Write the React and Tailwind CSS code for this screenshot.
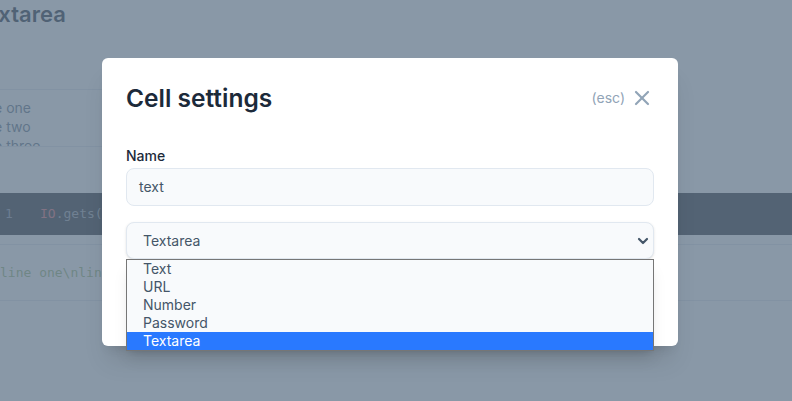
import { X } from 'lucide-react'

const options = ['Text', 'URL', 'Number', 'Password', 'Textarea']

function Chevron() {
  return (
    <svg width="12" height="12" viewBox="0 0 12 12" fill="none" className="text-[#445668]">
      <path d="M2 4l4 4 4-4" stroke="currentColor" strokeWidth="2.2" strokeLinecap="round" strokeLinejoin="round" />
    </svg>
  )
}

function BackgroundPage() {
  return (
    <div className="w-full h-full bg-white">
      <div className="h-7 ml-[-27px] text-[22px] leading-7 font-semibold text-[#1c2a3a] font-['Inter',sans-serif]">Textarea</div>

      <div className="mt-[61px] ml-[-40px] w-[620px] h-[58px] border-y border-[#e1e8f0] pl-[19px] pt-[8px] overflow-hidden text-sm leading-[19px] text-[#61758a]">
        <div>line one</div>
        <div>line two</div>
        <div>line three</div>
      </div>

      <div className="mt-[46px] h-[42px] bg-[#282c34] flex items-center font-['DejaVu_Sans_Mono',monospace] text-[13px]">
        <span className="w-[40px] pl-[5px] text-[#8a93a8]">1</span>
        <span className="text-[#e06c75]">IO</span>
        <span className="text-[#9aa1ad]">.gets()</span>
      </div>

      <div className="mt-[9px] h-[57px] border-y border-[#e1e8f0] flex items-center font-['DejaVu_Sans_Mono',monospace] text-[13px] text-[#98b878] whitespace-nowrap">
        line one\nline two\nline three
      </div>
    </div>
  )
}

export default function App() {
  return (
    <div className="relative w-full h-[401px] overflow-hidden font-['Inter',sans-serif]">
      <BackgroundPage />

      <div className="absolute inset-0 bg-[#61758a]/75" />

      <div className="absolute inset-0 flex justify-center pt-[58px] pr-3">
        <div className="w-[576px] self-start bg-white rounded-md p-6 shadow-xl">
          <div className="flex items-center justify-between">
            <h2 className="text-[24.5px] leading-8 font-semibold text-[#1c2a3a]">Cell settings</h2>
            <div className="flex items-center gap-[5px]">
              <span className="text-sm text-[#91a4b7]">(esc)</span>
              <X size={24} strokeWidth={2.2} className="text-[#91a4b7]" />
            </div>
          </div>

          <label className="block mt-8 mb-0.5 text-sm font-medium text-[#1c2a3a]">Name</label>
          <div className="h-[38px] px-3 flex items-center bg-[#f8fafc] border border-[#e1e8f0] rounded-lg text-sm text-[#445668]">
            text
          </div>

          <div className="relative mt-4">
            <div className="h-[37px] pl-4 pr-[4px] flex items-center justify-between bg-[#f8fafc] border border-[#e1e8f0] rounded-lg text-sm text-[#445668] shadow-sm">
              <span>Textarea</span>
              <Chevron />
            </div>

            <div className="absolute left-0 right-0 top-full z-10 border border-[#767676] bg-[#f8fafc] shadow-lg">
              {options.map((o) => (
                <div
                  key={o}
                  className={
                    o === 'Textarea'
                      ? 'h-[18px] pl-4 text-sm leading-[18px] bg-[#2979ff] text-white'
                      : 'h-[18px] pl-4 text-sm leading-[18px] text-[#445668]'
                  }
                >
                  {o}
                </div>
              ))}
            </div>
          </div>

          <div className="mt-6 h-[39px] flex justify-end gap-3">
            <div className="px-5 rounded-lg border border-[#e1e8f0] text-sm" />
          </div>
        </div>
      </div>
    </div>
  )
}
